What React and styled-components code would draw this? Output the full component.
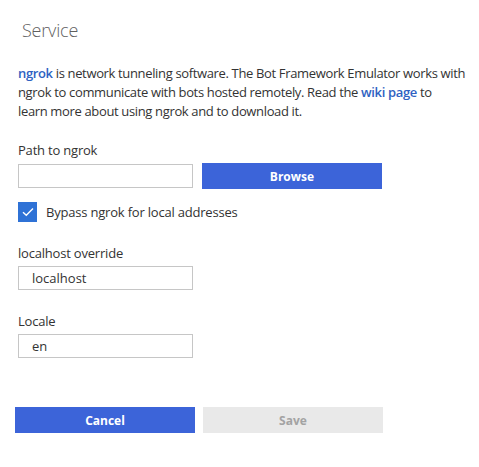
import styled, { createGlobalStyle } from "styled-components";

const GlobalStyle = createGlobalStyle`
    body {
        margin: 0;
        background: #ffffff;
        font-family: "Open Sans", "Noto Sans", sans-serif;
        color: #333333;
    }
`;

export default function App() {
    return (
        <>
            <GlobalStyle />
            <Page>
                <Title>Service</Title>
                <Description>
                    <Link>ngrok</Link> is network tunneling software. The Bot Framework Emulator works with<br />
                    ngrok to communicate with bots hosted remotely. Read the <Link>wiki page</Link> to<br />
                    learn more about using ngrok and to download it.
                </Description>

                <Field $top={20}>
                    <Label>Path to ngrok</Label>
                    <Row>
                        <TextInput defaultValue="" />
                        <Button $primary>Browse</Button>
                    </Row>
                </Field>

                <CheckRow>
                    <CheckBox>
                        <svg width="12" height="10" viewBox="0 0 12 10">
                            <path d="M1 5.2 L4.3 8.3 L11 1.5" fill="none" stroke="#fff" strokeWidth="1.4" />
                        </svg>
                    </CheckBox>
                    <CheckLabel>Bypass ngrok for local addresses</CheckLabel>
                </CheckRow>

                <Field $top={22}>
                    <Label>localhost override</Label>
                    <TextInput defaultValue="localhost" />
                </Field>

                <Field $top={22}>
                    <Label>Locale</Label>
                    <TextInput defaultValue="en" />
                </Field>

                <Footer>
                    <Button $primary>Cancel</Button>
                    <Button disabled>Save</Button>
                </Footer>
            </Page>
        </>
    );
}

const Page = styled.div`
    padding: 16px 14px 0 18px;
`;

const Title = styled.h1`
    margin: 0 0 0 4px;
    font-size: 18px;
    font-weight: 300;
    letter-spacing: -0.2px;
    color: #5f5f5f;
    line-height: 28px;
`;

const Description = styled.p`
    margin: 20px 0 0;
    font-size: 13px;
    line-height: 19px;
    letter-spacing: -0.35px;
    white-space: nowrap;
    color: #333333;
`;

const Link = styled.span`
    color: #2e62c2;
    font-weight: 600;
`;

const Field = styled.div`
    margin-top: ${p => p.$top ?? 18}px;
    display: flex;
    flex-direction: column;
`;

const Label = styled.label`
    font-size: 13px;
    line-height: 18px;
    letter-spacing: -0.2px;
    color: #333333;
    margin-bottom: 4px;
`;

const Row = styled.div`
    display: flex;
    align-items: center;
    gap: 9px;
`;

const TextInput = styled.input`
    box-sizing: border-box;
    width: 175px;
    height: 24px;
    border: 1px solid #c6c6c6;
    padding: 0 13px;
    font-family: inherit;
    font-size: 13px;
    color: #333333;
    outline: none;
`;

const Button = styled.button`
    box-sizing: border-box;
    width: 180px;
    height: 26px;
    border: none;
    font-family: inherit;
    font-size: 12px;
    font-weight: 700;
    background: ${p => (p.$primary ? "#3c64d9" : "#e9e9e9")};
    color: ${p => (p.$primary ? "#ffffff" : "#a3a3a3")};
    cursor: ${p => (p.disabled ? "default" : "pointer")};
`;

const CheckRow = styled.div`
    margin-top: 13px;
    display: flex;
    align-items: center;
    gap: 9px;
`;

const CheckBox = styled.span`
    width: 19px;
    height: 20px;
    background: #2f72d6;
    display: flex;
    align-items: center;
    justify-content: center;
`;

const CheckLabel = styled.span`
    font-size: 13px;
    letter-spacing: -0.2px;
    color: #333333;
`;

const Footer = styled.div`
    margin-top: 49px;
    margin-left: -3px;
    display: flex;
    gap: 8px;
`;
